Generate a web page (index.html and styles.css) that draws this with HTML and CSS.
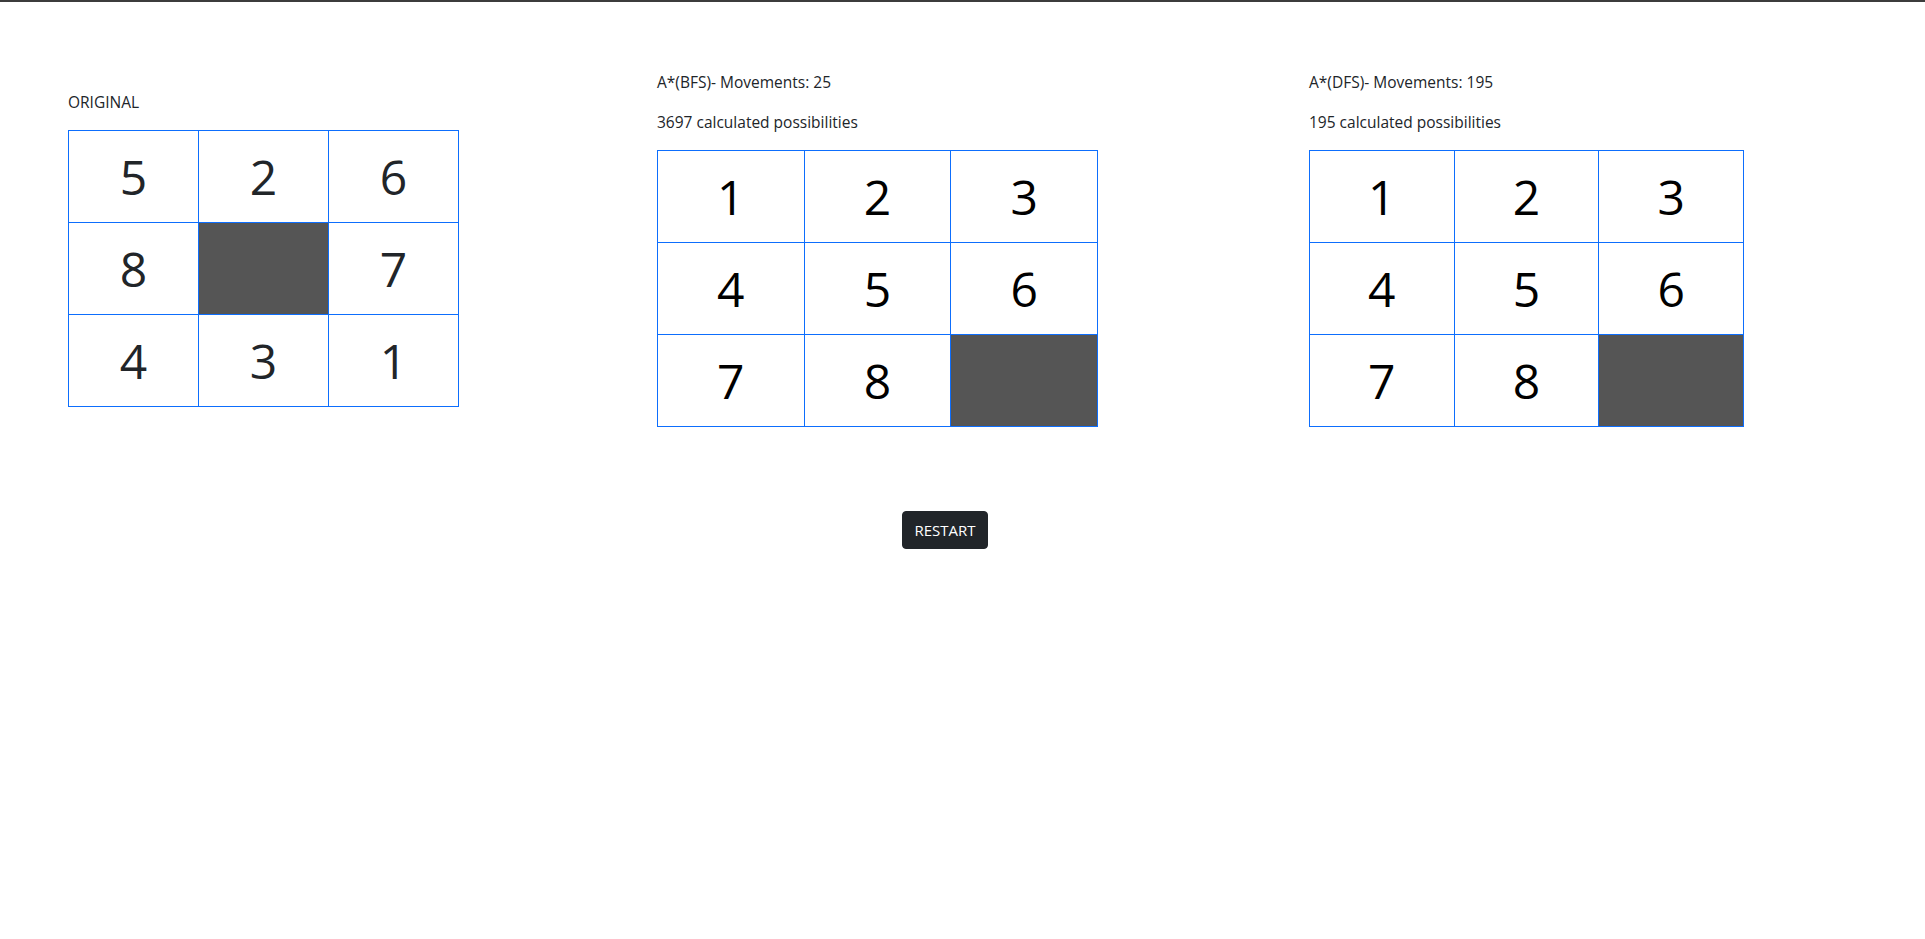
FILE: index.html
```html
<!DOCTYPE html>
<html lang="en">
<head>
<meta charset="utf-8">
<title>8 Puzzle</title>
<link rel="stylesheet" href="styles.css">
</head>
<body>
<div class="top-line"></div>
<main class="page">
  <section class="boards">
    <div class="board board-original">
      <p class="label">ORIGINAL</p>
      <table class="grid grid-small">
        <tr><td>5</td><td>2</td><td>6</td></tr>
        <tr><td>8</td><td class="blank"></td><td>7</td></tr>
        <tr><td>4</td><td>3</td><td>1</td></tr>
      </table>
    </div>
    <div class="board board-bfs">
      <p class="label">A*(BFS)- Movements: 25</p>
      <p class="label">3697 calculated possibilities</p>
      <table class="grid grid-solved grid-bfs">
        <tr><td>1</td><td>2</td><td>3</td></tr>
        <tr><td>4</td><td>5</td><td>6</td></tr>
        <tr><td>7</td><td>8</td><td class="blank"></td></tr>
      </table>
    </div>
    <div class="board board-dfs">
      <p class="label">A*(DFS)- Movements: 195</p>
      <p class="label">195 calculated possibilities</p>
      <table class="grid grid-solved grid-dfs">
        <tr><td>1</td><td>2</td><td>3</td></tr>
        <tr><td>4</td><td>5</td><td>6</td></tr>
        <tr><td>7</td><td>8</td><td class="blank"></td></tr>
      </table>
    </div>
  </section>
  <div class="actions">
    <button class="btn-restart" type="button">RESTART</button>
  </div>
</main>
</body>
</html>
```

FILE: styles.css
```css
html, body {
  margin: 0;
  padding: 0;
  background: #fff;
}

body {
  font-family: "Open Sans", "Noto Sans", "Liberation Sans", sans-serif;
  font-size: 15.5px;
  line-height: 24px;
  color: #212529;
}

.top-line {
  height: 2px;
  background: #3c3c3c;
}

.page {
  padding-top: 68px;
}

.boards {
  display: flex;
  align-items: center;
  padding-left: 68px;
}

.board-original {
  width: 391px;
  margin-right: 198px;
}

.board-bfs {
  width: 441px;
  margin-right: 211px;
}

.board-dfs {
  width: 435px;
}

.label {
  margin: 0 0 16px 0;
  white-space: nowrap;
}

.grid {
  width: 100%;
  border-collapse: collapse;
  table-layout: fixed;
}

.grid td {
  border: 1px solid #0d6efd;
  height: 91px;
  padding: 0;
  text-align: center;
  vertical-align: middle;
  font-size: 48px;
  font-weight: 400;
  line-height: 1;
}

.grid-small td {
  color: #212529;
}

.grid-solved td {
  color: #000;
}

.grid td.blank {
  background: #555555;
}

.actions {
  width: 1890px;
  margin-top: 84px;
  text-align: center;
}

.btn-restart {
  font-family: "Open Sans", "Noto Sans", "Liberation Sans", sans-serif;
  font-size: 15px;
  line-height: 24px;
  color: #fff;
  background: #212529;
  border: 1px solid #212529;
  border-radius: 4px;
  padding: 6px 10px;
  width: 86px;
  height: 38px;
  cursor: pointer;
}
```
